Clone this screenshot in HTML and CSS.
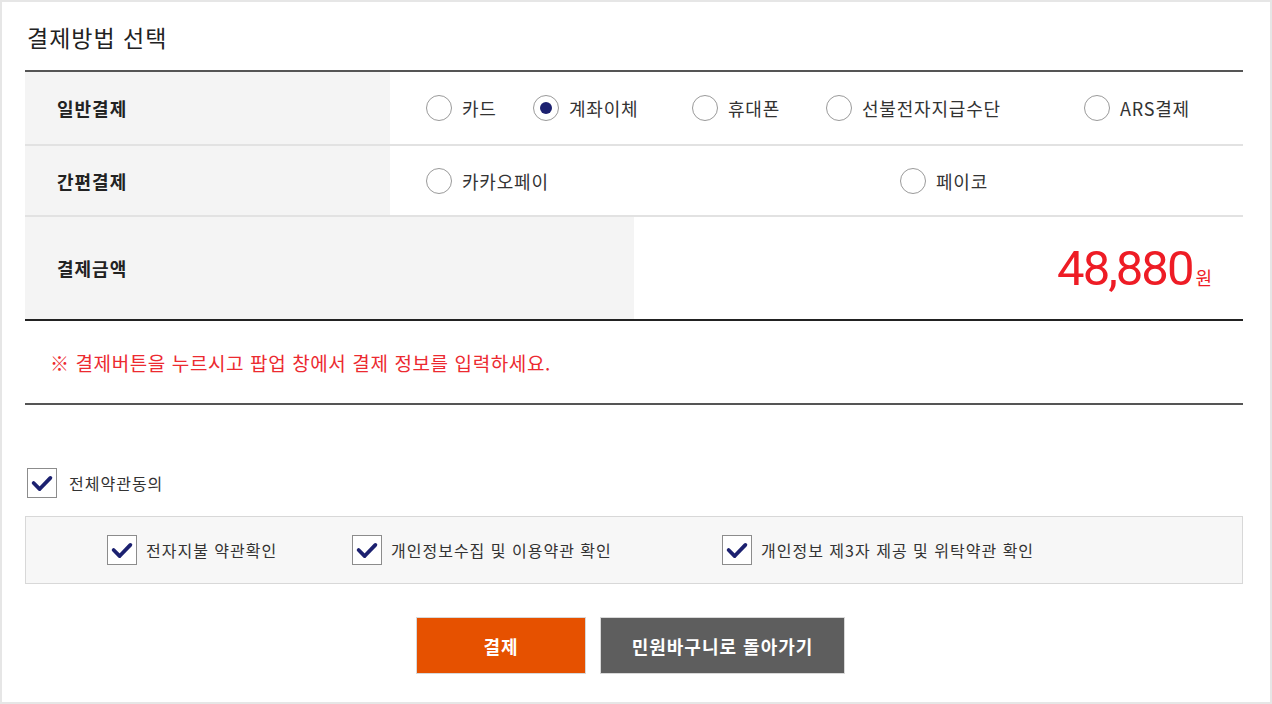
FILE: index.html
```html
<!DOCTYPE html>
<html lang="ko">
<head>
    <meta charset="UTF-8">
    <meta name="viewport" content="width=device-width, initial-scale=1.0">
    <title>결제방법 선택</title>
    <link rel="stylesheet" href="styles.css">
</head>
<body>

    <div class="page">
        <h2 class="title">결제방법 선택</h2>

        <div class="pay-table">
            <div class="row row-normal">
                <div class="row-label">일반결제</div>
                <div class="row-value options-normal">
                    <label class="opt"><span class="radio"></span>카드</label>
                    <label class="opt"><span class="radio checked"></span>계좌이체</label>
                    <label class="opt"><span class="radio"></span>휴대폰</label>
                    <label class="opt"><span class="radio"></span>선불전자지급수단</label>
                    <label class="opt"><span class="radio"></span>ARS결제</label>
                </div>
            </div>
            <div class="row row-easy">
                <div class="row-label">간편결제</div>
                <div class="row-value options-easy">
                    <label class="opt"><span class="radio"></span>카카오페이</label>
                    <label class="opt"><span class="radio"></span>페이코</label>
                </div>
            </div>
            <div class="row row-amount">
                <div class="row-label amount-label">결제금액</div>
                <div class="amount">48,880<span class="won">원</span></div>
            </div>
        </div>

        <p class="notice">※ 결제버튼을 누르시고 팝업 창에서 결제 정보를 입력하세요.</p>

        <label class="agree-all">
            <span class="check"><svg viewBox="0 0 30 30"><path d="M6 15 L12.5 21.5 L24 9.5" /></svg></span>
            전체약관동의
        </label>

        <div class="agree-box">
            <label class="agree-item">
                <span class="check"><svg viewBox="0 0 30 30"><path d="M6 15 L12.5 21.5 L24 9.5" /></svg></span>
                전자지불 약관확인
            </label>
            <label class="agree-item">
                <span class="check"><svg viewBox="0 0 30 30"><path d="M6 15 L12.5 21.5 L24 9.5" /></svg></span>
                개인정보수집 및 이용약관 확인
            </label>
            <label class="agree-item">
                <span class="check"><svg viewBox="0 0 30 30"><path d="M6 15 L12.5 21.5 L24 9.5" /></svg></span>
                개인정보 제3자 제공 및 위탁약관 확인
            </label>
        </div>

        <div class="buttons">
            <button class="btn btn-pay">결제</button>
            <button class="btn btn-back">민원바구니로 돌아가기</button>
        </div>
    </div>

</body>
</html>
```

FILE: styles.css
```css
body {
    margin: 0;
    font-family: "Noto Sans CJK KR", sans-serif;
    color: #222;
    background-color: white;
}

.page {
    width: 1272px;
    height: 704px;
    box-sizing: border-box;
    border: 2px solid #e6e6e6;
    padding: 20px 27px 0 23px;
}

.title {
    font-size: 23px;
    font-weight: 400;
    letter-spacing: 1px;
    line-height: 30px;
    margin: 0 0 18px 2px;
    color: #222;
}

.pay-table {
    border-top: 2px solid #555;
    border-bottom: 2px solid #222;
}

.row {
    display: flex;
    border-bottom: 2px solid #e2e2e2;
}

.row-normal {
    height: 72px;
}

.row-easy {
    height: 69px;
}

.row-amount {
    height: 102px;
    border-bottom: 0;
}

.row-label {
    width: 365px;
    flex-shrink: 0;
    box-sizing: border-box;
    padding-left: 32px;
    display: flex;
    align-items: center;
    background-color: #f4f4f4;
    font-size: 18px;
    font-weight: 700;
    letter-spacing: 1px;
    color: #222;
}

.amount-label {
    width: 609px;
}

.row-value {
    display: grid;
    align-items: center;
    padding-left: 36px;
    flex: 1;
}

.options-normal {
    grid-template-columns: 107px 159px 134px 258px auto;
}

.options-easy {
    grid-template-columns: 474px auto;
}

.opt {
    display: flex;
    align-items: center;
    gap: 10px;
    font-size: 18px;
    letter-spacing: 0.8px;
    color: #333;
    line-height: 24px;
}

.radio {
    width: 24px;
    height: 24px;
    border: 1.5px solid #9a9a9a;
    border-radius: 50%;
    display: flex;
    justify-content: center;
    align-items: center;
    background-color: white;
}

.radio.checked::after {
    content: "";
    width: 12px;
    height: 12px;
    border-radius: 50%;
    background-color: #1c2170;
}

.amount {
    flex: 1;
    display: flex;
    justify-content: flex-end;
    align-items: baseline;
    padding: 0 31px 0 0;
    align-self: center;
    font-family: Roboto, sans-serif;
    font-size: 49px;
    letter-spacing: -2px;
    color: #ee1c25;
}

.won {
    font-family: "Noto Sans CJK KR", sans-serif;
    font-size: 18px;
    letter-spacing: 0;
    margin-left: 3px;
}

.notice {
    margin: 0;
    height: 84px;
    box-sizing: border-box;
    padding-left: 25px;
    display: flex;
    align-items: center;
    border-bottom: 2px solid #555;
    font-size: 19px;
    letter-spacing: 0.6px;
    color: #ec2a30;
}

.agree-all {
    display: flex;
    align-items: center;
    gap: 12px;
    margin: 63px 0 0 2px;
    font-size: 16px;
    letter-spacing: 1px;
    color: #333;
}

.check {
    width: 30px;
    height: 30px;
    box-sizing: border-box;
    border: 1.5px solid #8c8c8c;
    background-color: white;
    display: flex;
}

.check svg {
    width: 100%;
    height: 100%;
}

.check path {
    fill: none;
    stroke: #1c2170;
    stroke-width: 4;
    stroke-linecap: round;
    stroke-linejoin: round;
}

.agree-box {
    margin-top: 18px;
    height: 68px;
    box-sizing: border-box;
    border: 1px solid #d8d8d8;
    background-color: #f7f7f7;
    padding-left: 81px;
    display: grid;
    grid-template-columns: 245px 370px auto;
    align-items: center;
}

.agree-item {
    display: flex;
    align-items: center;
    gap: 9px;
    font-size: 16px;
    letter-spacing: 1px;
    color: #333;
}

.buttons {
    display: flex;
    justify-content: center;
    gap: 14px;
    margin-top: 33px;
    padding-right: 7px;
}

.btn {
    height: 57px;
    border: 1px solid #d8d8d8;
    font-family: "Noto Sans CJK KR", sans-serif;
    font-size: 18px;
    font-weight: 700;
    letter-spacing: 1px;
    color: white;
    cursor: pointer;
}

.btn-pay {
    width: 170px;
    background-color: #e65100;
}

.btn-back {
    width: 245px;
    background-color: #5e5e5e;
}
```
